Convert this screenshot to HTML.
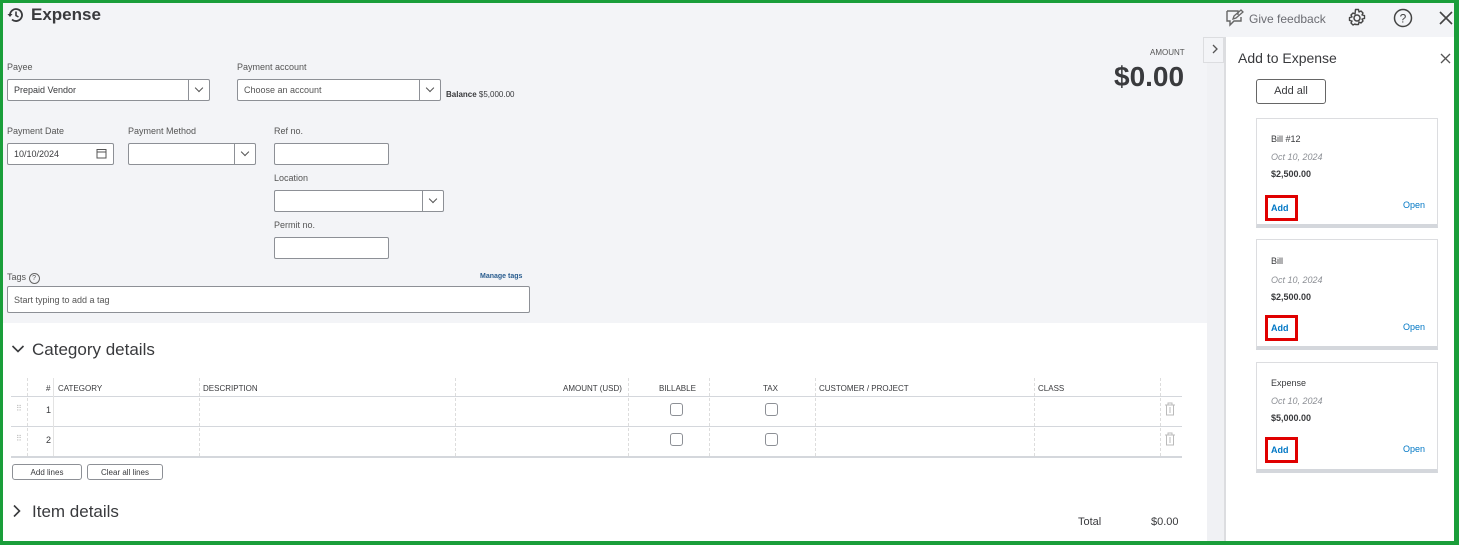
<!DOCTYPE html>
<html><head><meta charset="utf-8"><style>
*{box-sizing:border-box;margin:0;padding:0}
body{width:1459px;height:545px;overflow:hidden;font-family:"Liberation Sans",sans-serif;color:#393a3d;background:#f3f4f7;position:relative}
.a{position:absolute}
.lbl{font-size:9px;color:#555}
.inp{position:absolute;background:#fff;border:1px solid #8d9096;border-radius:2px;height:22px;font-size:9px;color:#393a3d;padding:5px 6px}
.dd{position:absolute;right:0;top:0;bottom:0;width:21px;border-left:1px solid #8d9096}
.dd:after{content:"";position:absolute;left:7px;top:5px;width:5px;height:5px;border-right:1px solid #555;border-bottom:1px solid #555;transform:rotate(45deg)}
.th{font-size:8px;color:#393a3d;position:absolute;top:384px}
.vl{position:absolute;width:0;border-left:1px dashed #ddd}
.cb{position:absolute;width:13px;height:13px;border:1px solid #8d9096;border-radius:3px;background:#fff}
.card{position:absolute;left:1256px;width:182px;background:#fff;border:1px solid #dcdde0;border-bottom:4px solid #d4d7dc}
.card .t{position:absolute;left:14px;font-size:9px;color:#393a3d}
.addb{position:absolute;left:8px;width:33px;height:26px;border:3px solid #e00000;font-size:9px;font-weight:bold;color:#0077c5;padding:5px 0 0 3px}
.open{position:absolute;right:12px;font-size:9px;color:#0077c5}
.btn{position:absolute;border:1px solid #8d9096;border-radius:3px;background:#fff;font-size:8px;text-align:center;padding-top:3px}
</style></head><body>
<div class="a" style="left:3px;top:323px;width:1204px;height:222px;background:#fff"></div>
<svg class="a" style="left:7px;top:6px" width="18" height="18" viewBox="0 0 18 18"><path d="M3 9a6 6 0 1 1 2 4.5" fill="none" stroke="#393a3d" stroke-width="1.8"/><path d="M0.5 8l2.5 3 2.5-3z" fill="#393a3d"/><path d="M9 5.5v4l2.5 1.5" fill="none" stroke="#393a3d" stroke-width="1.6"/></svg>
<div class="a" style="left:31px;top:5px;font-size:17px;font-weight:bold">Expense</div>
<svg class="a" style="left:1224px;top:9px" width="20" height="18" viewBox="0 0 20 18"><path d="M3 2h11v4M3 2v10h3v4l4-4h7V8" fill="none" stroke="#666" stroke-width="1.4"/><path d="M9 10l1-3 7-6 2 2-7 6z" fill="none" stroke="#666" stroke-width="1.3"/></svg>
<div class="a" style="left:1249px;top:12px;font-size:12px;color:#6b6c72">Give feedback</div>
<svg class="a" style="left:1347px;top:8px" width="20" height="20" viewBox="0 0 20 20"><circle cx="10" cy="10" r="3" fill="none" stroke="#444" stroke-width="1.5"/><path d="M8.5 1.5h3l.5 2.5 2-1 2 2-1 2 2.5.5v3l-2.5.5 1 2-2 2-2-1-.5 2.5h-3L8 16l-2 1-2-2 1-2-2.5-.5v-3L5 9 4 7l2-2 2 1z" fill="none" stroke="#444" stroke-width="1.4" stroke-linejoin="round"/></svg>
<svg class="a" style="left:1393px;top:8px" width="20" height="20" viewBox="0 0 20 20"><circle cx="10" cy="10" r="8.5" fill="none" stroke="#444" stroke-width="1.5"/><text x="10" y="14.5" font-size="12" text-anchor="middle" fill="#444" font-family="Liberation Sans">?</text></svg>
<svg class="a" style="left:1439px;top:11px" width="14" height="14" viewBox="0 0 14 14"><path d="M1 1l12 12M13 1L1 13" stroke="#444" stroke-width="1.6"/></svg>
<div class="a lbl" style="left:7px;top:62px">Payee</div>
<div class="inp" style="left:7px;top:79px;width:203px">Prepaid Vendor<div class="dd"></div></div>
<div class="a lbl" style="left:237px;top:62px">Payment account</div>
<div class="inp" style="left:237px;top:79px;width:204px;color:#555">Choose an account<div class="dd"></div></div>
<div class="a" style="left:446px;top:90px;font-size:8px"><b>Balance</b> $5,000.00</div>
<div class="a" style="left:1150px;top:48px;font-size:8px;color:#555">AMOUNT</div>
<div class="a" style="left:1114px;top:61px;font-size:28px;font-weight:bold">$0.00</div>
<div class="a lbl" style="left:7px;top:126px">Payment Date</div>
<div class="inp" style="left:7px;top:143px;width:107px">10/10/2024<svg class="a" style="right:6px;top:4px" width="11" height="11" viewBox="0 0 11 11"><rect x="1" y="1.5" width="9" height="8.5" fill="none" stroke="#555"/><path d="M1 4h9" stroke="#555"/></svg></div>
<div class="a lbl" style="left:128px;top:126px">Payment Method</div>
<div class="inp" style="left:128px;top:143px;width:128px"><div class="dd"></div></div>
<div class="a lbl" style="left:274px;top:126px">Ref no.</div>
<div class="inp" style="left:274px;top:143px;width:115px"></div>
<div class="a lbl" style="left:274px;top:173px">Location</div>
<div class="inp" style="left:274px;top:190px;width:170px"><div class="dd"></div></div>
<div class="a lbl" style="left:274px;top:220px">Permit no.</div>
<div class="inp" style="left:274px;top:237px;width:115px"></div>
<div class="a lbl" style="left:7px;top:272px">Tags <span style="display:inline-block;width:11px;height:11px;border:1px solid #666;border-radius:50%;font-size:7px;text-align:center;line-height:9px">?</span></div>
<div class="a" style="left:480px;top:273px;font-size:7px;font-weight:bold;color:#2a5d8f">Manage tags</div>
<div class="inp" style="left:7px;top:286px;width:523px;height:27px;padding-top:8px;color:#555">Start typing to add a tag</div>
<svg class="a" style="left:11px;top:344px" width="14" height="10" viewBox="0 0 14 10"><path d="M1.5 2l5.5 5.5L12.5 2" fill="none" stroke="#393a3d" stroke-width="1.6"/></svg>
<div class="a" style="left:32px;top:340px;font-size:17px">Category details</div>
<div class="th" style="left:46px">#</div>
<div class="th" style="left:58px">CATEGORY</div>
<div class="th" style="left:203px">DESCRIPTION</div>
<div class="th" style="left:563px">AMOUNT (USD)</div>
<div class="th" style="left:659px">BILLABLE</div>
<div class="th" style="left:763px">TAX</div>
<div class="th" style="left:819px">CUSTOMER / PROJECT</div>
<div class="th" style="left:1038px">CLASS</div>
<div class="a" style="left:11px;top:396px;width:1171px;border-top:1px solid #d4d7dc"></div>
<div class="a" style="left:11px;top:426px;width:1171px;border-top:1px solid #d4d7dc"></div>
<div class="a" style="left:11px;top:456px;width:1171px;border-top:2px solid #d4d7dc"></div>
<div class="vl" style="left:27px;top:378px;height:78px"></div>
<div class="vl" style="left:53px;top:378px;height:78px;border-left-style:solid;border-color:#e3e3e3"></div>
<div class="vl" style="left:199px;top:378px;height:78px"></div>
<div class="vl" style="left:455px;top:378px;height:78px"></div>
<div class="vl" style="left:628px;top:378px;height:78px"></div>
<div class="vl" style="left:709px;top:378px;height:78px"></div>
<div class="vl" style="left:815px;top:378px;height:78px"></div>
<div class="vl" style="left:1034px;top:378px;height:78px"></div>
<div class="vl" style="left:1160px;top:378px;height:78px"></div>
<div class="a" style="left:16px;top:404px;font-size:8px;color:#bbb">⠿</div>
<div class="a" style="left:16px;top:434px;font-size:8px;color:#bbb">⠿</div>
<div class="a" style="left:46px;top:405px;font-size:9px">1</div>
<div class="a" style="left:46px;top:435px;font-size:9px">2</div>
<div class="cb" style="left:670px;top:403px"></div><div class="cb" style="left:765px;top:403px"></div>
<div class="cb" style="left:670px;top:433px"></div><div class="cb" style="left:765px;top:433px"></div>
<svg class="a" style="left:1164px;top:402px" width="12" height="14" viewBox="0 0 12 14"><path d="M1 3h10M4 3V1h4v2M2.5 3v10h7V3M6 5v6" fill="none" stroke="#bbb"/></svg>
<svg class="a" style="left:1164px;top:432px" width="12" height="14" viewBox="0 0 12 14"><path d="M1 3h10M4 3V1h4v2M2.5 3v10h7V3M6 5v6" fill="none" stroke="#bbb"/></svg>
<div class="btn" style="left:12px;top:464px;width:70px;height:16px">Add lines</div>
<div class="btn" style="left:87px;top:464px;width:76px;height:16px">Clear all lines</div>
<svg class="a" style="left:12px;top:504px" width="10" height="14" viewBox="0 0 10 14"><path d="M2 1.5l5.5 5.5L2 12.5" fill="none" stroke="#393a3d" stroke-width="1.6"/></svg>
<div class="a" style="left:32px;top:502px;font-size:17px">Item details</div>
<div class="a" style="left:1078px;top:516px;font-size:11px">Total</div>
<div class="a" style="left:1151px;top:516px;font-size:11px">$0.00</div>
<div class="a" style="left:1207px;top:37px;width:17px;height:508px;background:#f0f1f4"></div>
<div class="a" style="left:1203px;top:37px;width:21px;height:26px;background:#f3f4f7;border:1px solid #dcdde0"></div>
<svg class="a" style="left:1211px;top:43px" width="8" height="12" viewBox="0 0 8 12"><path d="M2 2l4 4-4 4" fill="none" stroke="#555" stroke-width="1.3"/></svg>
<div class="a" style="left:1224px;top:37px;width:231px;height:508px;background:#fff;border-left:2px solid #dcdde0"></div>
<div class="a" style="left:1238px;top:50px;font-size:14px">Add to Expense</div>
<svg class="a" style="left:1440px;top:53px" width="11" height="11" viewBox="0 0 11 11"><path d="M1 1l9 9M10 1L1 10" stroke="#555" stroke-width="1.3"/></svg>
<div class="btn" style="left:1256px;top:79px;width:70px;height:25px;font-size:11px;padding-top:5px;border-color:#666">Add all</div>
<div class="card" style="top:118px;height:110px"><div class="t" style="top:15px">Bill #12</div><div class="t" style="top:33px;font-style:italic;color:#8d9096">Oct 10, 2024</div><div class="t" style="top:50px;font-weight:bold">$2,500.00</div><div class="addb" style="top:76px">Add</div><div class="open" style="top:81px">Open</div></div>
<div class="card" style="top:239px;height:111px"><div class="t" style="top:16px">Bill</div><div class="t" style="top:35px;font-style:italic;color:#8d9096">Oct 10, 2024</div><div class="t" style="top:52px;font-weight:bold">$2,500.00</div><div class="addb" style="top:75px">Add</div><div class="open" style="top:82px">Open</div></div>
<div class="card" style="top:362px;height:111px"><div class="t" style="top:15px">Expense</div><div class="t" style="top:33px;font-style:italic;color:#8d9096">Oct 10, 2024</div><div class="t" style="top:50px;font-weight:bold">$5,000.00</div><div class="addb" style="top:74px">Add</div><div class="open" style="top:81px">Open</div></div>
<div class="a" style="left:0;top:0;width:1459px;height:545px;border:3px solid #1a9e3a;border-right-width:5px;border-bottom-width:4px"></div>
</body></html>
